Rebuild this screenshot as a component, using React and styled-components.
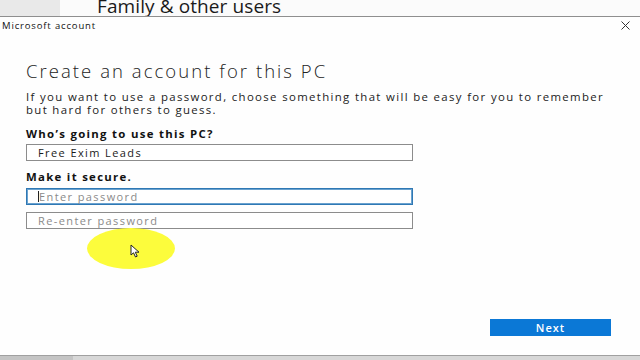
import React from "react";
import styled, { createGlobalStyle } from "styled-components";

const Global = createGlobalStyle`
  html, body { margin: 0; padding: 0; background: #fff; }
  body { font-family: "Open Sans", "Noto Sans", sans-serif; overflow: hidden; }
  * { box-sizing: border-box; }
`;

const Page = styled.div`
  width: 640px;
  height: 360px;
  display: flex;
  flex-direction: column;
  position: relative;
  overflow: hidden;
  background: #fdfdfd;
`;

const TopBand = styled.div`
  height: 17px;
  display: flex;
  flex-shrink: 0;
  border-bottom: 1px solid #8f8f8f;
  box-shadow: 0 1px 2px rgba(0,0,0,0.15);
  background: #fbfbfb;
  overflow: hidden;
`;

const SidePane = styled.div`
  width: 60px;
  background: #e9e9e9;
`;

const PageTitle = styled.div`
  padding-left: 37px;
  font-size: 19px;
  line-height: 20px;
  margin-top: -4px;
  color: #1a1a1a;
  letter-spacing: 0.1px;
  white-space: nowrap;
`;

const Dialog = styled.div`
  flex: 1;
  display: flex;
  flex-direction: column;
  background: #fefefe;
`;

const TitleBar = styled.div`
  height: 17px;
  display: flex;
  align-items: center;
  justify-content: space-between;
  padding: 0 10px 0 2px;
  font-size: 9.5px;
  letter-spacing: 0.85px;
  color: #111;
`;

const Body = styled.div`
  padding: 0 0 0 26px;
  display: flex;
  flex-direction: column;
  flex: 1;
`;

const Heading = styled.h1`
  margin: 25px 0 0 0;
  font-weight: 300;
  font-size: 18.5px;
  line-height: 24px;
  letter-spacing: 2.05px;
  color: #222;
`;

const Para = styled.p`
  margin: 8px 0 0 0;
  font-size: 11.4px;
  line-height: 12.5px;
  letter-spacing: 1.35px;
  color: #222;
  white-space: nowrap;
`;

const Label = styled.div`
  margin-top: ${p => p.$mt}px;
  font-size: 11.4px;
  font-weight: 700;
  line-height: 14px;
  letter-spacing: 1.3px;
  color: #111;
`;

const Field = styled.div`
  margin-top: ${p => p.$mt}px;
  width: 387px;
  height: 17px;
  border: 1px solid ${p => (p.$focus ? "#2f78b4" : "#8c8c8c")};
  box-shadow: ${p => (p.$focus ? "inset 0 0 0 1px #6aa2cf" : "none")};
  display: flex;
  align-items: center;
  padding-left: 11px;
  font-size: 11px;
  letter-spacing: 1.4px;
  color: ${p => (p.$placeholder ? "#8a8a8a" : "#1a1a1a")};
  background: #fff;
`;

const Caret = styled.span`
  display: inline-block;
  width: 1px;
  height: 11px;
  background: #222;
`;

const Footer = styled.div`
  margin-top: auto;
  display: flex;
  justify-content: flex-end;
  padding: 0 29px 19px 0;
`;

const NextButton = styled.button`
  width: 121px;
  height: 17px;
  border: none;
  background: #0b78d6;
  color: #fff;
  font-family: inherit;
  font-size: 11px;
  font-weight: 600;
  letter-spacing: 1px;
  padding: 0;
`;

const BottomStrip = styled.div`
  height: 5px;
  flex-shrink: 0;
  display: flex;
  border-top: 1px solid #a0a0a0;
  background: #d7d7d7;
`;

const BottomLeft = styled.div`
  width: 73px;
  background: #c4c4c4;
`;

const Highlight = styled.div`
  position: absolute;
  left: 87px;
  top: 228px;
  width: 88px;
  height: 41px;
  border-radius: 50%;
  background: #fcfc3c;
  filter: blur(0.6px);
`;

const Pointer = styled.svg`
  position: absolute;
  left: 130px;
  top: 244px;
`;

export default function App() {
  return (
    <>
      <Global />
      <Page>
        <TopBand>
          <SidePane />
          <PageTitle>Family &amp; other users</PageTitle>
        </TopBand>
        <Dialog>
          <TitleBar>
            <span>Microsoft account</span>
            <svg width="9" height="9" viewBox="0 0 9 9">
              <path d="M0.5 0.5 L8.5 8.5 M8.5 0.5 L0.5 8.5" stroke="#333" strokeWidth="1" />
            </svg>
          </TitleBar>
          <Body>
            <Heading>Create an account for this PC</Heading>
            <Para>
              If you want to use a password, choose something that will be easy for you to remember
              <br />
              but hard for others to guess.
            </Para>
            <Label $mt={11}>Who’s going to use this PC?</Label>
            <Field $mt={3}>Free Exim Leads</Field>
            <Label $mt={9}>Make it secure.</Label>
            <Field $mt={4} $focus $placeholder>
              <Caret />
              Enter password
            </Field>
            <Field $mt={7} $placeholder>Re-enter password</Field>
            <Footer>
              <NextButton>Next</NextButton>
            </Footer>
          </Body>
        </Dialog>
        <BottomStrip>
          <BottomLeft />
        </BottomStrip>
        <Highlight />
        <Pointer width="12" height="14" viewBox="0 0 12 14">
          <path d="M1 1 L1 11 L3.5 8.8 L5.5 13 L7.2 12.2 L5.3 8.2 L9 8.2 Z" fill="#fff" stroke="#222" strokeWidth="1" strokeLinejoin="round" />
        </Pointer>
      </Page>
    </>
  );
}
